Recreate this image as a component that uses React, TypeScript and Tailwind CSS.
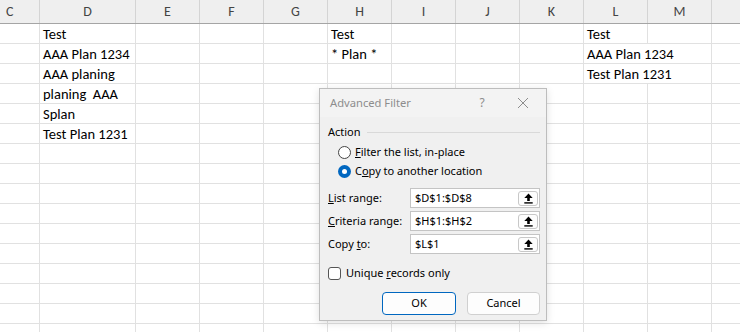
import React from 'react'

const cols = [
  { key: 'C', w: 'w-[40px]', label: 'justify-start pl-[6px]' },
  { key: 'D', w: 'w-[96px]', label: 'justify-center' },
  { key: 'E', w: 'w-[64px]', label: 'justify-center' },
  { key: 'F', w: 'w-[64px]', label: 'justify-center' },
  { key: 'G', w: 'w-[64px]', label: 'justify-center' },
  { key: 'H', w: 'w-[64px]', label: 'justify-center' },
  { key: 'I', w: 'w-[64px]', label: 'justify-center' },
  { key: 'J', w: 'w-[64px]', label: 'justify-center' },
  { key: 'K', w: 'w-[64px]', label: 'justify-center' },
  { key: 'L', w: 'w-[64px]', label: 'justify-center' },
  { key: 'M', w: 'w-[64px]', label: 'justify-center' },
  { key: 'N', w: 'w-[64px]', label: 'justify-center' },
]

const data: Record<string, string[]> = {
  D: ['Test', 'AAA Plan 1234', 'AAA planing', 'planing  AAA', 'Splan', 'Test Plan 1231'],
  H: ['Test', '* Plan *'],
  L: ['Test', 'AAA Plan 1234', 'Test Plan 1231'],
}

// cells whose text spills into the next column (gridline hidden)
const spills: Record<string, number[]> = { L: [1, 2] }

const cellFont = { fontFamily: 'Carlito, Calibri, Lato, "Liberation Sans", sans-serif' }

function Sheet() {
  const rows = Array.from({ length: 16 }, (_, i) => i)
  return (
    <div className="flex flex-col w-[740px] h-[332px] overflow-hidden bg-white" style={cellFont}>
      <div className="flex h-[24px] bg-[#efefef] border-b border-[#a5a5a5] shrink-0">
        {cols.map((c) => (
          <div
            key={c.key}
            className={`${c.w} shrink-0 flex items-center ${c.label} border-r border-[#d4d4d4] text-[14px] text-[#444]`}
          >
            {/* N is centred past the window edge, so its letter is not seen */}
            {c.key === 'N' ? '' : c.key}
          </div>
        ))}
      </div>
      {rows.map((r) => (
        <div key={r} className="flex h-[20px] shrink-0 border-b border-[#e1e1e1]">
          {cols.map((c) => {
            const text = data[c.key]?.[r]
            const spill = spills[c.key]?.includes(r)
            return (
              <div
                key={c.key}
                className={`${c.w} shrink-0 relative ${spill ? '' : 'border-r border-[#e1e1e1]'}`}
              >
                {text && (
                  <span className="absolute left-[3px] top-[1px] text-[14.5px] leading-[18px] text-black whitespace-pre z-10">
                    {text}
                  </span>
                )}
              </div>
            )
          })}
        </div>
      ))}
    </div>
  )
}

function Radio({ checked }: { checked?: boolean }) {
  return checked ? (
    <span className="w-[13px] h-[13px] rounded-full bg-[#0067c0] flex items-center justify-center shrink-0">
      <span className="w-[5px] h-[5px] rounded-full bg-white" />
    </span>
  ) : (
    <span className="w-[13px] h-[13px] rounded-full border border-[#444] bg-white shrink-0" />
  )
}

function PickButton() {
  return (
    <span className="absolute right-[1px] top-[2px] w-[20px] h-[15px] rounded-[3px] border border-[#c8c8c8] bg-[#fdfdfd] flex items-center justify-center">
      <svg width="9" height="11" viewBox="0 0 9 11">
        <path d="M4.5 0.5 L8.7 5 L5.8 5 L5.8 8 L3.2 8 L3.2 5 L0.3 5 Z" fill="#000" />
        <rect x="0.3" y="9.2" width="8.4" height="1.4" fill="#000" />
      </svg>
    </span>
  )
}

function RangeRow({ label, value }: { label: React.ReactNode; value: string }) {
  return (
    <div className="flex items-center h-[20px]">
      <div className="w-[82px] shrink-0">{label}</div>
      <div className="relative w-[133px] h-[20px] bg-white border border-[#c4c4c4] flex items-center pl-[4px]">
        {value}
        <PickButton />
      </div>
    </div>
  )
}

function Dialog() {
  return (
    <div
      className="absolute left-[319px] top-[88px] w-[228px] h-[233px] bg-[#f0f0f0] border border-[#bdbdbd] shadow-[0_2px_8px_rgba(0,0,0,0.12)] flex flex-col text-[11px] text-black"
      style={{ fontFamily: '"Noto Sans", "Open Sans", sans-serif' }}
    >
      <div className="h-[28px] shrink-0 bg-[#f3f3f3] flex items-center pl-[10px] text-[#8d8d8d] text-[11.2px]">
        <span className="flex-1">Advanced Filter</span>
        <span className="w-[20px] text-center mr-[25px] text-[12px] text-[#8d8d8d]">?</span>
        <svg width="12" height="12" viewBox="0 0 12 12" className="mr-[17px]">
          <path d="M1 1 L11 11 M11 1 L1 11" stroke="#8d8d8d" strokeWidth="1" />
        </svg>
      </div>
      <div className="flex flex-col pl-[8px] pr-[6px]">
        <div className="flex items-center h-[16px] mt-[7px]">
          <span>Action</span>
          <span className="flex-1 border-t border-[#d9d9d9] ml-[6px]" />
        </div>
        <div className="flex flex-col ml-[10px] mt-[3px]">
          <div className="flex items-center gap-[4px] h-[19px]">
            <Radio />
            <span><u>F</u>ilter the list, in-place</span>
          </div>
          <div className="flex items-center gap-[4px] h-[19px]">
            <Radio checked />
            <span>C<u>o</u>py to another location</span>
          </div>
        </div>
        <div className="flex flex-col gap-[3px] mt-[7px]">
          <RangeRow label={<><u>L</u>ist range:</>} value="$D$1:$D$8" />
          <RangeRow label={<><u>C</u>riteria range:</>} value="$H$1:$H$2" />
          <RangeRow label={<>Copy <u>t</u>o:</>} value="$L$1" />
        </div>
        <div className="flex items-center gap-[5px] h-[16px] mt-[11px]">
          <span className="w-[13px] h-[13px] rounded-[3px] border border-[#555] bg-white" />
          <span>Unique <u>r</u>ecords only</span>
        </div>
        <div className="flex justify-end gap-[11px] mt-[11px]">
          <button className="w-[74px] h-[23px] rounded-[4px] border border-[#0067c0] bg-[#fdfdfd]">OK</button>
          <button className="w-[73px] h-[23px] rounded-[4px] border border-[#d0d0d0] bg-[#fdfdfd]">Cancel</button>
        </div>
      </div>
    </div>
  )
}

export default function App() {
  return (
    <div className="relative w-[740px] h-[332px] overflow-hidden">
      <Sheet />
      <Dialog />
    </div>
  )
}
